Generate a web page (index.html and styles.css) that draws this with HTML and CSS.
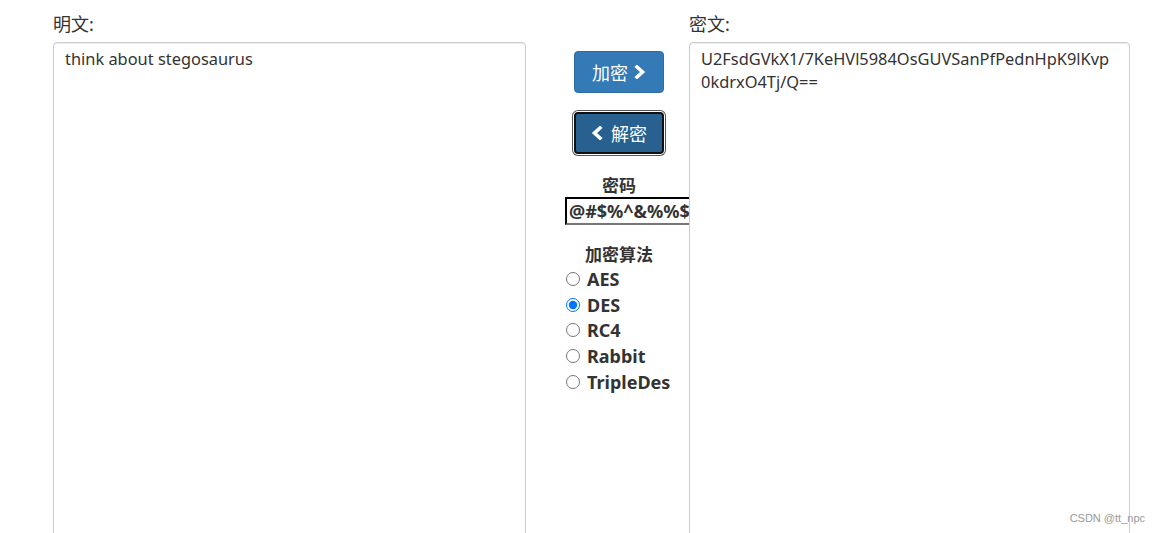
FILE: index.html
```html
<!DOCTYPE html>
<html lang="zh">
<head>
<meta charset="utf-8">
<title>加密解密</title>
<link rel="stylesheet" href="styles.css">
</head>
<body>
<div class="page">
  <div class="col col-left">
    <label class="field-label">明文:</label>
    <textarea class="text-box left-box">think about stegosaurus</textarea>
  </div>
  <div class="col col-mid">
    <button class="btn btn-enc">加密 <svg class="chev" viewBox="0 0 12 14" width="12" height="14"><polyline points="3,2 8.5,7 3,12" /></svg></button>
    <button class="btn btn-dec"><svg class="chev" viewBox="0 0 12 14" width="12" height="14"><polyline points="9,2 3.5,7 9,12" /></svg> 解密</button>
    <div class="mid-title">密码</div>
    <input class="pwd" type="text" value="@#$%^&amp;%%$#@!">
    <div class="mid-title algo-title">加密算法</div>
    <div class="radios">
      <label class="radio-row"><input type="radio" name="algo"> AES</label>
      <label class="radio-row"><input type="radio" name="algo" checked> DES</label>
      <label class="radio-row"><input type="radio" name="algo"> RC4</label>
      <label class="radio-row"><input type="radio" name="algo"> Rabbit</label>
      <label class="radio-row"><input type="radio" name="algo"> TripleDes</label>
    </div>
  </div>
  <div class="col col-right">
    <label class="field-label">密文:</label>
    <textarea class="text-box right-box">U2FsdGVkX1/7KeHVl5984OsGUVSanPfPednHpK9lKvp0kdrxO4Tj/Q==</textarea>
  </div>
</div>
<div class="watermark">CSDN @tt_npc</div>
</body>
</html>
```
FILE: styles.css
```css
html, body {
  margin: 0;
  padding: 0;
  background: #fff;
  overflow: hidden;
}
body {
  font-family: "Noto Sans", "Noto Sans CJK SC", sans-serif;
  color: #333;
  width: 1160px;
  height: 533px;
  position: relative;
}
.page {
  display: flex;
  align-items: flex-start;
  padding-top: 10px;
  height: 523px;
  overflow: hidden;
}
.col {
  display: flex;
  flex-direction: column;
}
.col-left {
  margin-left: 53px;
  width: 473px;
}
.col-right {
  width: 441px;
  position: relative;
  z-index: 1;
}
.field-label {
  font-size: 18px;
  line-height: 28px;
  height: 28px;
  margin-bottom: 4px;
  color: #333;
}
.text-box {
  box-sizing: border-box;
  width: 100%;
  height: 500px;
  border: 1px solid #ccc;
  border-radius: 4px;
  padding: 4px 11px;
  font-family: "Noto Sans", "Noto Sans CJK SC", sans-serif;
  font-size: 16.4px;
  line-height: 23px;
  color: #333;
  resize: none;
  background: #fff;
  margin: 0;
  box-shadow: inset 0 1px 1px rgba(0,0,0,.075);
}
.col-mid {
  width: 124px;
  padding-left: 39px;
  padding-top: 41px;
  align-items: flex-start;
}
.btn {
  width: 90px;
  height: 42px;
  margin-left: 9px;
  border-radius: 4px;
  font-family: "Noto Sans", "Noto Sans CJK SC", sans-serif;
  font-size: 18px;
  color: #fff;
  display: flex;
  align-items: center;
  justify-content: center;
  gap: 6px;
  padding: 0;
  box-sizing: border-box;
}
.btn-enc {
  background: #337ab7;
  border: 1px solid #2e6da4;
}
.btn-dec {
  margin-top: 19px;
  background: #286090;
  border: 2px solid #111;
  box-shadow: 0 0 0 1px #fff, 0 0 0 2px #555;
  height: 42px;
  gap: 8px;
}
.chev {
  fill: none;
  stroke: #fff;
  stroke-width: 3.6;
  stroke-linecap: square;
  stroke-linejoin: miter;
}
.mid-title {
  width: 108px;
  text-align: center;
  font-weight: bold;
  font-size: 17px;
  line-height: 22px;
  margin-top: 21px;
  color: #333;
}
.pwd {
  box-sizing: border-box;
  width: 150px;
  height: 28px;
  margin: 0;
  padding: 0 2px;
  border: 2px inset #767676;
  border-top-color: #222;
  border-left-color: #222;
  font-family: "Noto Sans", "Noto Sans CJK SC", sans-serif;
  font-weight: bold;
  font-size: 18px;
  color: #333;
  background: #fff;
}
.algo-title {
  margin-top: 19px;
}
.radios {
  display: flex;
  flex-direction: column;
}
.radio-row {
  display: flex;
  align-items: center;
  height: 25.7px;
  font-weight: bold;
  font-size: 18px;
  color: #333;
}
.radio-row input {
  margin: 0 7px 0 1px;
  width: 14px;
  height: 14px;
}
.watermark {
  position: absolute;
  right: 15px;
  bottom: 9px;
  font-family: "Liberation Sans", "Noto Sans", sans-serif;
  font-size: 11px;
  color: #999;
  z-index: 2;
}
```
